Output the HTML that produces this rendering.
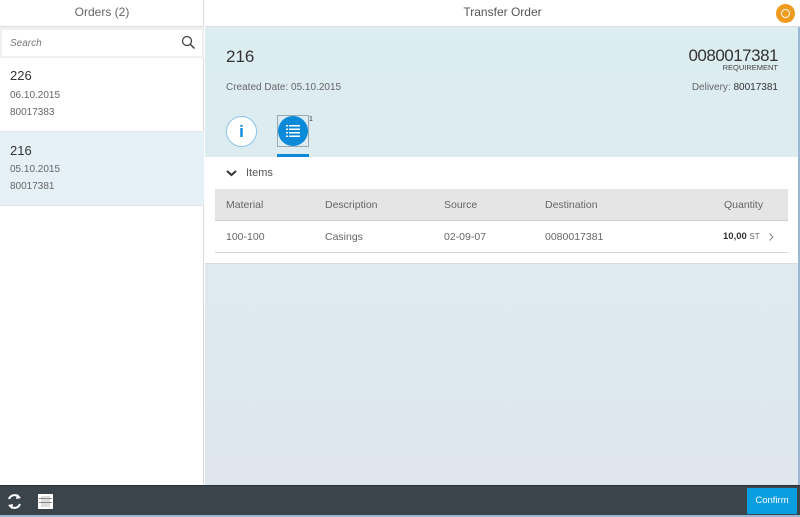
<!DOCTYPE html>
<html><head><style>
*{margin:0;padding:0;box-sizing:border-box}
body{width:800px;height:517px;overflow:hidden;font-family:"Liberation Sans",sans-serif;position:relative;background:#fff;color:#333}
.abs{position:absolute}
.lp{left:0;top:0;width:204px;height:485px;background:#fff;border-right:1px solid #d9d9d9}
.g{color:#666;font-size:11px}
</style></head><body>
<div class="abs lp">
 <div class="abs" style="left:0;top:0;width:204px;height:27px;border-bottom:1px solid #ddd;text-align:center;line-height:25px;font-size:12px;color:#666">Orders (2)</div>
 <div class="abs" style="left:0;top:27px;width:204px;height:31px;background:#f0f0f0"></div>
 <div class="abs" style="left:2px;top:30px;width:200px;height:26px;background:#fff"></div>
 <div class="abs" style="left:10px;top:38px;font-size:10px;font-style:italic;color:#777">Search</div>
 <svg class="abs" style="left:181px;top:35px" width="15" height="15" viewBox="0 0 15 15"><circle cx="6" cy="6" r="4.5" fill="none" stroke="#444" stroke-width="1.3"/><path d="M9.3 9.3L13.5 13.5" stroke="#444" stroke-width="1.5"/></svg>
 <div class="abs" style="left:0;top:58px;width:204px;height:74px;border-bottom:1px solid #e5e5e5"></div>
 <div class="abs" style="left:10px;top:68px;font-size:13px">226</div>
 <div class="abs g" style="left:10px;top:90px;font-size:10px">06.10.2015</div>
 <div class="abs g" style="left:10px;top:107px;font-size:10px">80017383</div>
 <div class="abs" style="left:0;top:132px;width:204px;height:74px;background:#e5f0f7;border-bottom:1px solid #e5e5e5"></div>
 <div class="abs" style="left:10px;top:143px;font-size:13px">216</div>
 <div class="abs g" style="left:10px;top:164px;font-size:10px">05.10.2015</div>
 <div class="abs g" style="left:10px;top:181px;font-size:10px">80017381</div>
</div>
<div class="abs" style="left:205px;top:0;width:595px;height:485px;background:linear-gradient(#dceef2,#dfe6ee)"></div>
<div class="abs" style="left:205px;top:0;width:595px;height:27px;background:#fff;border-bottom:1px solid #ddd;text-align:center;line-height:24px;font-size:12px;color:#555">Transfer Order</div>
<div class="abs" style="left:776px;top:4px;width:19px;height:19px;border-radius:50%;background:#f09b1d"></div>
<div class="abs" style="left:781px;top:9px;width:9px;height:9px;border-radius:50%;border:1.3px solid #fff"></div>
<div class="abs" style="left:226px;top:47px;font-size:17px;color:#333">216</div>
<div class="abs g" style="left:226px;top:82px;font-size:10px">Created Date: 05.10.2015</div>
<div class="abs" style="right:22px;top:46px;font-size:17px;color:#333;letter-spacing:-0.5px">0080017381</div>
<div class="abs" style="right:22px;top:63px;font-size:7.5px;color:#444">REQUIREMENT</div>
<div class="abs" style="right:22px;top:82px;font-size:10px;color:#666">Delivery: <span style="color:#333">80017381</span></div>
<div class="abs" style="left:226px;top:116px;width:31px;height:31px;border-radius:50%;background:#fff;border:1px solid #8cc4e8;text-align:center;line-height:29px;color:#0a8ad8;font-weight:bold;font-size:17px">i</div>
<div class="abs" style="left:277px;top:115px;width:32px;height:32px;border:1px solid #99aab5"></div>
<div class="abs" style="left:278px;top:116px;width:30px;height:30px;border-radius:50%;background:#0a8ad8"></div>
<svg class="abs" style="left:284px;top:122px" width="18" height="18" viewBox="0 0 18 18" fill="#fff"><rect x="2" y="3" width="2" height="1.5"/><rect x="5" y="3" width="11" height="1.5"/><rect x="2" y="6.5" width="2" height="1.5"/><rect x="5" y="6.5" width="11" height="1.5"/><rect x="2" y="10" width="2" height="1.5"/><rect x="5" y="10" width="11" height="1.5"/><rect x="2" y="13.5" width="2" height="1.5"/><rect x="5" y="13.5" width="11" height="1.5"/></svg>
<div class="abs" style="left:309px;top:116px;font-size:7px">1</div>
<div class="abs" style="left:277px;top:154px;width:32px;height:3px;background:#0a8ad8"></div>
<div class="abs" style="left:205px;top:157px;width:593px;height:107px;background:#fff;border-bottom:1px solid #d5dde2"></div>
<svg class="abs" style="left:226px;top:169px" width="11" height="8"><path d="M1 2L5.5 6L10 2" fill="none" stroke="#333" stroke-width="2"/></svg>
<div class="abs" style="left:246px;top:167px;font-size:11px;color:#555">Items</div>
<div class="abs" style="left:215px;top:189px;width:573px;height:32px;background:#e5e5e5;border-bottom:1px solid #d0d0d0"></div>
<div class="abs" style="left:215px;top:252px;width:573px;height:1px;background:#d5d5d5"></div>
<div class="abs g" style="left:226px;top:199px;font-size:10.5px">Material</div>
<div class="abs g" style="left:325px;top:199px;font-size:10.5px">Description</div>
<div class="abs g" style="left:444px;top:199px;font-size:10.5px">Source</div>
<div class="abs g" style="left:545px;top:199px;font-size:10.5px">Destination</div>
<div class="abs g" style="left:724px;top:199px;font-size:10.5px">Quantity</div>
<div class="abs g" style="left:226px;top:231px;font-size:10.5px">100-100</div>
<div class="abs g" style="left:325px;top:231px;font-size:10.5px">Casings</div>
<div class="abs g" style="left:444px;top:231px;font-size:10.5px">02-09-07</div>
<div class="abs g" style="left:545px;top:231px;font-size:10.5px">0080017381</div>
<div class="abs" style="left:723px;top:231px;font-size:9.5px;color:#333"><b>10,00</b> <span style="font-size:8px;color:#666">ST</span></div>
<svg class="abs" style="left:768px;top:232px" width="7" height="10"><path d="M1.5 1.5L5 5L1.5 8.5" fill="none" stroke="#888" stroke-width="1"/></svg>
<div class="abs" style="left:798px;top:27px;width:2px;height:458px;background:#9ab8d4"></div>
<div class="abs" style="left:0;top:485px;width:800px;height:32px;background:#3b434b;border-top:1px solid #2a3036;border-bottom:2px solid #9ab8d4"></div>
<svg class="abs" style="left:6px;top:492px" width="17" height="19" viewBox="0 0 17 19"><path d="M3 7A6 6 0 0 1 13 5" fill="none" stroke="#fff" stroke-width="2"/><path d="M14 12A6 6 0 0 1 4 14" fill="none" stroke="#fff" stroke-width="2"/><path d="M11 2L15 6L10 7Z" fill="#fff"/><path d="M6 17L2 13L7 12Z" fill="#fff"/></svg>
<div class="abs" style="left:38px;top:494px;width:15px;height:15px;background:#ddd;border:2px solid #fff;border-left-width:3px;border-right-width:3px"></div>
<div class="abs" style="left:39px;top:498px;width:13px;height:1px;background:#888"></div>
<div class="abs" style="left:39px;top:502px;width:13px;height:1px;background:#888"></div>
<div class="abs" style="left:747px;top:488px;width:50px;height:26px;background:#0a9de0;color:#fff;font-size:9.5px;text-align:center;line-height:26px">Confirm</div>
</body></html>
